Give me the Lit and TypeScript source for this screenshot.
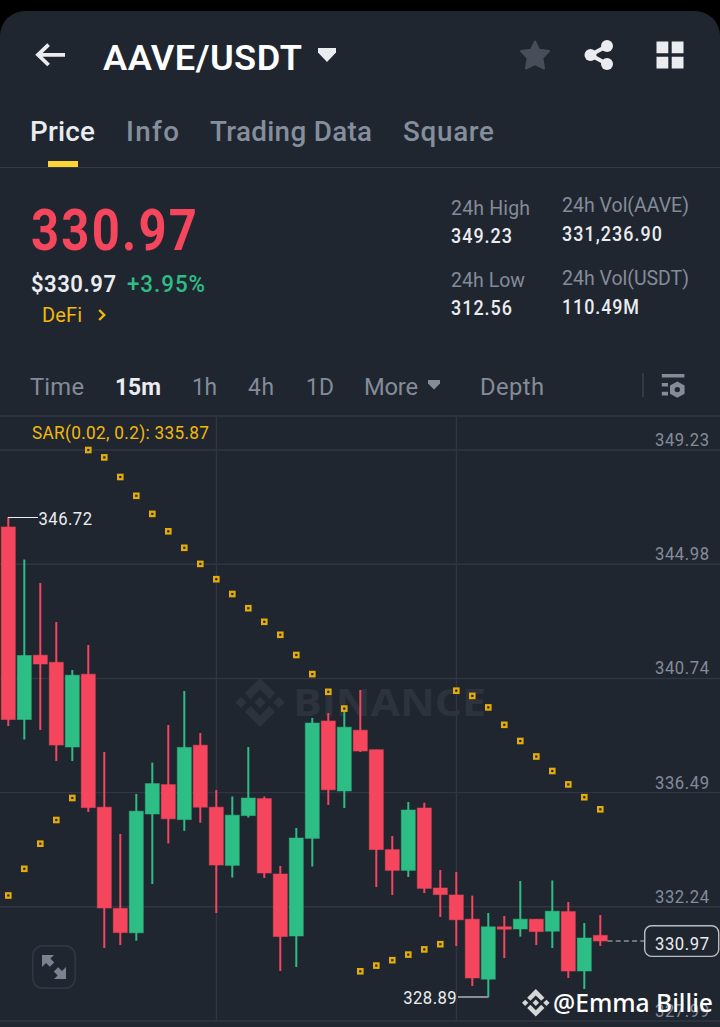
import { LitElement, html, svg, css } from "lit";
import { customElement } from "lit/decorators.js";
import { classMap } from "lit/directives/class-map.js";

// [direction, wick top, body top, body bottom, wick bottom]
type Candle = ["u" | "d", number, number, number, number];

const CANDLES: Candle[] = [
  ["d", 517, 527, 719.5, 726],
  ["u", 559.5, 655.5, 719.5, 739.5],
  ["d", 583, 655.2, 664, 730],
  ["d", 622, 662.3, 745, 761],
  ["u", 670, 675.2, 747, 761],
  ["d", 645, 674.2, 807.6, 812],
  ["d", 752, 807.2, 908, 948],
  ["d", 834, 908.4, 932.6, 945],
  ["u", 794, 811.2, 932.8, 940.7],
  ["u", 762.6, 783.6, 814, 884],
  ["d", 725, 784.6, 818.8, 843.5],
  ["u", 691, 747.4, 819.6, 830.8],
  ["d", 733, 745.2, 807.2, 822.7],
  ["d", 790, 807.2, 865, 913],
  ["u", 796.5, 815.2, 865.4, 877.5],
  ["u", 747, 798, 815.6, 817.5],
  ["d", 796.5, 798.6, 873, 878],
  ["d", 866, 874, 936.5, 971],
  ["u", 828, 838, 936, 967],
  ["u", 718, 723, 838.4, 866.5],
  ["d", 713, 721, 789.8, 805],
  ["u", 711, 727.2, 791, 808],
  ["d", 690, 730.2, 751, 752],
  ["d", 749.7, 749.7, 849.6, 887],
  ["d", 836, 849.6, 870.4, 895],
  ["u", 802, 810, 870.4, 877],
  ["d", 802.7, 808, 888.4, 893],
  ["d", 870, 888, 894.6, 917],
  ["d", 872, 895, 919.8, 946],
  ["d", 895.6, 919.2, 978, 986],
  ["u", 913, 926.8, 979.2, 997],
  ["d", 916, 926.8, 929.2, 958],
  ["u", 881, 919.2, 929, 936.6],
  ["d", 919.2, 919.2, 931.6, 945],
  ["u", 880.5, 911.2, 931.2, 948],
  ["d", 902, 911.6, 971, 978],
  ["u", 923, 938, 971, 989],
  ["d", 915, 935.4, 941, 946],
];

const SAR: number[] = [
  895.5, 868.8, 843.7, 820, 798, 450, 457.4, 477, 495.8, 513.9, 531.3, 547.8, 563.9, 579.2, 594,
  608.2, 621.8, 634.8, 655, 674.1, 691.8, 708.6, 971.3, 965.6, 960.2, 954.6, 949.4, 944.2, 690.7,
  695.9, 707.4, 724.8, 741, 756.5, 771, 784.4, 797.2, 809.3,
];

const LEVELS: [string, number][] = [
  ["349.23", 446],
  ["344.98", 560],
  ["340.74", 674],
  ["336.49", 788.6],
  ["332.24", 902.6],
  ["327.99", 1016.6],
];

const xOf = (i: number) => 8.3 + i * 16;

// Narrowed glyphs with open tracking, filling an exact width.
const label = (cls: string, t: string, x: number, y: number, w: number, k = 0.9) =>
  svg`<text class=${cls} transform="translate(${x} ${y}) scale(${k} 1)" textLength=${w / k}>${t}</text>`;

// Four chevrons around a centre diamond, drawn in a 48-unit box.
const diamond = svg`<path d="M24 0 L39 15 L33.4 20.6 L24 11.2 L14.6 20.6 L9 15Z
  M24 48 L39 33 L33.4 27.4 L24 36.8 L14.6 27.4 L9 33Z
  M0 24 L5.5 18.5 L11 24 L5.5 29.5Z M48 24 L42.5 18.5 L37 24 L42.5 29.5Z
  M24 18.4 L29.6 24 L24 29.6 L18.4 24Z"/>`;

@customElement("price-chart")
export class PriceChart extends LitElement {
  static styles = css`
    :host { display: block; }
    svg { display: block; }
    text { font-family: Roboto, "Liberation Sans", sans-serif; font-size: 18.5px; }
    .grid { stroke: #2f3641; fill: none; stroke-width: 1.4; }
    .grid.bold { stroke-width: 2; stroke: #2b323d; }
    .u { fill: #2ebd85; stroke: #2ebd85; }
    .d { fill: #f6465d; stroke: #f6465d; }
    .body { stroke-width: 1; stroke-opacity: 0.5; }
    .wick { stroke: none; }
    .sar { fill: #202630; stroke: #e5ad0a; stroke-width: 2.2; }
    .gold { fill: #f0b90b; }
    .axis { fill: #848b99; }
    .light { fill: #eaecef; }
    .rule { stroke: #eaecef; stroke-width: 1; fill: none; }
    .rule.dim { stroke: #868d9b; stroke-width: 2; }
    .dash { stroke: #868d9b; stroke-width: 1.6; stroke-dasharray: 5 3.2; }
    .tag { fill: #202630; stroke: #b7bdc6; stroke-width: 1.4; }
    .ghost { fill: #2c333d; }
    .ghost text { font-family: "Open Sans", Inter, sans-serif; font-weight: 700; font-size: 38px; }
    .button { fill: #202630; stroke: #2f3641; stroke-width: 1.8; }
    .arrows { fill: #7a8190; }
    .credit { fill: #fff; }
    .credit .mark { fill: #d6d6d6; }
    .credit text { font-family: "Noto Sans", sans-serif; font-weight: 500; font-size: 25px; }
  `;

  render() {
    return html`<svg width="720" height="612" viewBox="0 415 720 612">
      <path class="grid bold" d="M0 416H720M0 450H720M0 1021H720" />
      <path class="grid" d="M0 564.3H720M0 678.5H720M0 792.6H720M0 906.8H720M216.5 417V1020M456.5 417V1020" />
      <g class="ghost">
        <g transform="translate(235.5 678) scale(1.02)">${diamond}</g>
        <text x="293" y="716.3" textLength="193" lengthAdjust="spacingAndGlyphs">BINANCE</text>
      </g>
      ${CANDLES.map(([dir, hi, top, bottom, lo], i) => {
        const x = xOf(i);
        return svg`<g class=${dir}>
          <rect class="wick" x=${x - 1} y=${hi} width="2" height=${lo - hi}/>
          <rect class="body" x=${x - 7} y=${top} width="14" height=${bottom - top}/>
        </g>`;
      })}
      ${SAR.map((y, i) => svg`<rect class="sar" x=${xOf(i) - 2.2} y=${y - 2.2} width="4.4" height="4.4"/>`)}
      ${label("gold", "SAR(0.02, 0.2): 335.87", 32, 438.8, 177, 0.93)}
      <path class="rule" d="M8 517.5H38" />
      ${label("light", "346.72", 38.5, 525, 53.5)}
      <path class="rule dim" d="M458 997H488.6" />
      ${label("light", "328.89", 403.2, 1004, 53.5)}
      ${LEVELS.map(([t, y]) => label("axis", t, 655, y, 54))}
      <path class="dash" d="M607.5 941H644" />
      <rect class="tag" x="644.7" y="925.8" width="74" height="30.6" rx="7" />
      ${label("light", "330.97", 655, 950, 54)}
      <rect class="button" x="32.8" y="945.8" width="42.4" height="42.4" rx="10" />
      <path class="arrows" d="M42 955H54L50.4 958.6L54.2 962.4L49.8 966.8L46 963L42 967Z
        M66 979H54L57.6 975.4L53.8 971.6L58.2 967.2L62 971L66 967Z" />
      <g class="credit">
        <g class="mark" transform="translate(522 989) scale(0.575)">${diamond}</g>
        <text x="553" y="1012" textLength="160" lengthAdjust="spacingAndGlyphs">@Emma Billie</text>
      </g>
    </svg>`;
  }
}

@customElement("app-root")
export class AppRoot extends LitElement {
  static styles = css`
    :host { display: block; background: #000; padding-top: 11px; box-sizing: border-box; height: 1027px; overflow: hidden; }
    * { box-sizing: border-box; }
    svg { display: block; flex: none; }
    .screen { background: #202630; border-radius: 25px 25px 0 0; height: 1016px; display: flex; flex-direction: column; font-family: Roboto, "Liberation Sans", sans-serif; color: #eaecef; white-space: nowrap; }
    .top { height: 91px; flex: none; display: flex; align-items: center; padding: 0 36px 3px 35px; }
    .pair { margin: 3px 0 0 38px; width: 199px; font-weight: 600; color: #fff; }
    .fit { display: block; overflow: visible; fill: currentColor; }
    .caret { margin: 1px 0 0 16px; }
    .actions { margin-left: auto; display: flex; align-items: center; }
    .actions .share { margin-left: 34px; }
    .actions .menu { margin-left: 42px; }
    .tabs { height: 66px; flex: none; display: flex; gap: 31px; padding-left: 30px; border-bottom: 1px solid #333a45; font-weight: 500; color: #848e9c; }
    .tab { height: 65px; display: flex; flex-direction: column; align-items: center; justify-content: space-between; }
    .tab .bar { width: 30px; height: 6px; background: #fcd535; }
    .tab.on { color: #eaecef; }
    .summary { height: 194px; flex: none; display: flex; }
    .quote { padding: 32px 0 0 31px; width: 451px; }
    .big { font-weight: 700; color: #f6465d; height: 59px; }
    .sub { display: flex; gap: 11px; margin-top: 9px; font-weight: 600; height: 30px; }
    .up { color: #2ebd85; font-weight: 500; }
    .sector { display: flex; align-items: center; gap: 16px; color: #f0b90b; margin: 5px 0 0 11px; height: 24px; }
    .stats { display: flex; flex-direction: column; width: 111px; padding-top: 27px; }
    .stats.vol { padding-top: 24px; }
    .label { color: #848b99; height: 26px; }
    .value { height: 46px; padding-top: 2px; font-weight: 500; }
    .vol .value { height: 47px; padding-top: 3px; }
    .frames { height: 53px; flex: none; display: flex; align-items: center; padding: 0 35px 5px 30px; color: #848b99; }
    .frame { font-weight: 400; }
    .frame.on { color: #eaecef; font-weight: 700; }
    .split { width: 2px; height: 24px; background: #333a45; margin: -2px 17px 0 auto; }
    .chart { flex: none; }
  `;

  // A text run set to an exact width: glyphs scaled by k, tracking takes up the rest.
  private run(text: string, size: number, width: number, height: number, k = 1) {
    return html`<svg class="fit" width=${width} height=${height}>
      <text transform="translate(0 ${height / 2 + size * 0.355}) scale(${k} 1)" font-size=${size}
        textLength=${width / k}>${text}</text>
    </svg>`;
  }

  render() {
    const tabs: [string, number][] = [["Price", 65], ["Info", 53], ["Trading Data", 162], ["Square", 91]];
    const frames: [string, number, number][] = [
      ["Time", 54, 31], ["15m", 46, 31], ["1h", 25, 31], ["4h", 26, 32], ["1D", 28, 30], ["More", 54, 9],
    ];
    return html`<main class="screen">
      <header class="top">
        <svg width="30" height="24" viewBox="0 0 30 24" fill="none" stroke="#eaecef" stroke-width="3.8">
          <path d="M30 11.8H3M13.6 1.6L3 11.8L13.6 22" />
        </svg>
        <div class="pair">${this.run("AAVE/USDT", 35.5, 199, 46, 1.02)}</div>
        <svg class="caret" width="18" height="18" viewBox="0 0 18 18"><path fill="#eaecef" d="M0 1H18V5.5L9 15L0 5.5Z" /></svg>
        <div class="actions">
          <svg width="30" height="30" viewBox="0 0 30 30">
            <path fill="#474d59" stroke="#474d59" stroke-width="2" stroke-linejoin="round"
              d="M15 1.5L19 9.7L29 11.1L22.4 18L24 28.5L15 24L6 28.5L7.6 18L1 11.1L11 9.7Z" />
          </svg>
          <svg class="share" width="30" height="30" viewBox="0 0 30 30" fill="#eaecef">
            <path d="M23 6L6.5 15L23 24" fill="none" stroke="#eaecef" stroke-width="4" />
            <circle cx="6.5" cy="15" r="6" /><circle cx="23" cy="6" r="6" /><circle cx="23" cy="24" r="6" />
          </svg>
          <svg class="menu" width="28" height="28" viewBox="0 0 28 28" fill="#eaecef">
            <path d="M.5.5H12.3V12.3H.5ZM15.7.5H27.5V12.3H15.7ZM.5 15.7H12.3V27.5H.5ZM15.7 15.7H27.5V27.5H15.7Z" />
          </svg>
        </div>
      </header>
      <nav class="tabs">
        ${tabs.map(([t, w], i) => html`<div class=${classMap({ tab: true, on: i === 0 })}>
          ${this.run(t, 27, w, 59, 1.03)}${i === 0 ? html`<div class="bar"></div>` : ""}
        </div>`)}
      </nav>
      <section class="summary">
        <div class="quote">
          <div class="big">${this.run("330.97", 57, 166, 59, 0.86)}</div>
          <div class="sub">${this.run("$330.97", 24, 85, 30, 0.92)}<span class="up">${this.run("+3.95%", 24, 78, 30, 0.93)}</span></div>
          <div class="sector">${this.run("DeFi", 20, 40, 24)}
            <svg width="8" height="12" viewBox="0 0 8 12"><path d="M1.2 1L6.2 6L1.2 11" fill="none" stroke="#f0b90b" stroke-width="2.4" /></svg>
          </div>
        </div>
        <div class="stats">
          <div class="label">${this.run("24h High", 19.5, 79, 26)}</div>
          <div class="value">${this.run("349.23", 19.5, 61, 26, 0.92)}</div>
          <div class="label">${this.run("24h Low", 19.5, 74, 26)}</div>
          <div class="value">${this.run("312.56", 19.5, 61, 26, 0.92)}</div>
        </div>
        <div class="stats vol">
          <div class="label">${this.run("24h Vol(AAVE)", 19.5, 127, 26)}</div>
          <div class="value">${this.run("331,236.90", 19.5, 100, 26, 0.92)}</div>
          <div class="label">${this.run("24h Vol(USDT)", 19.5, 127, 26)}</div>
          <div class="value">${this.run("110.49M", 19.5, 77, 26, 0.92)}</div>
        </div>
      </section>
      <nav class="frames">
        ${frames.map(([t, w, gap], i) => html`<span class=${classMap({ frame: true, on: i === 1 })}>${this.run(t, 24, w, 30, i > 0 && i < 5 ? 0.95 : 0.99)}</span><span style="width:${gap}px"></span>`)}
        <svg width="14" height="14" viewBox="0 0 14 14"><path fill="#848b99" d="M1 1H13V4.5L7 10.5L1 4.5Z" /></svg>
        <span style="width:39px"></span>
        <span class="frame">${this.run("Depth", 24, 64, 30, 0.99)}</span>
        <span class="split"></span>
        <svg width="24" height="26" viewBox="0 0 24 26" fill="#848b99">
          <path d="M.8 1H23.4V4.6H.8ZM.8 10H7V13.4H.8ZM.8 18.8H7V22.4H.8Z" />
          <path fill-rule="evenodd" d="M16.3 8.4L23.6 12.5V20.7L16.3 24.8L9 20.7V12.5ZM16.3 13.9A2.7 2.7 0 1 0 16.3 19.3A2.7 2.7 0 1 0 16.3 13.9Z" />
        </svg>
      </nav>
      <price-chart class="chart"></price-chart>
    </main>`;
  }
}
